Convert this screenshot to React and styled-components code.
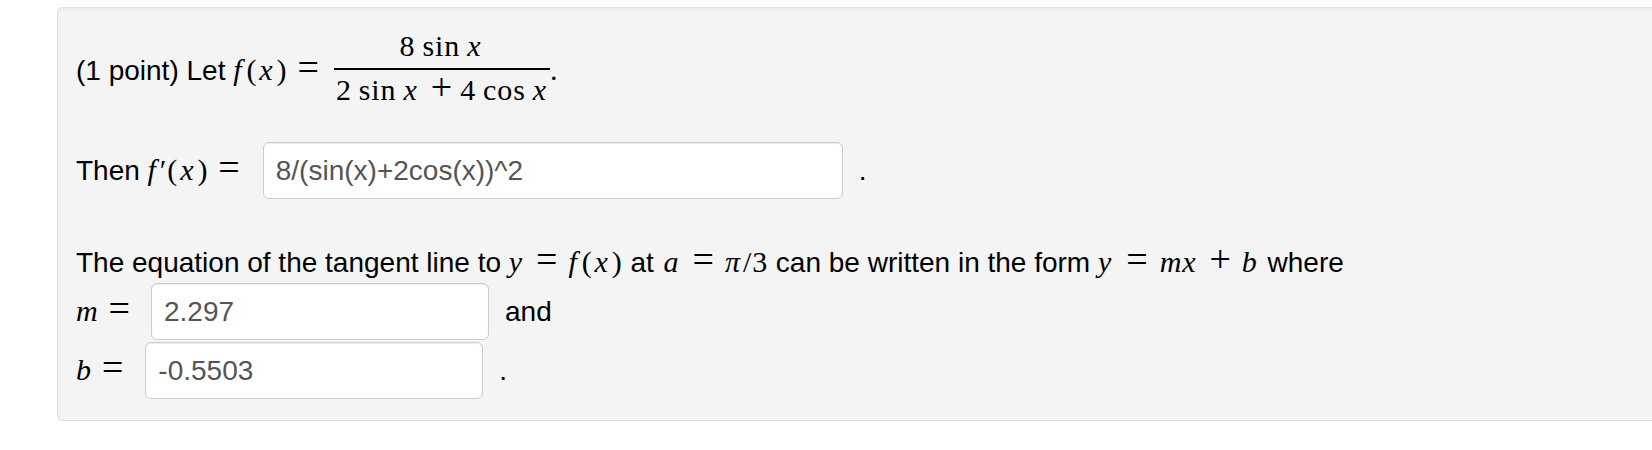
import React from 'react';
import styled, { createGlobalStyle } from 'styled-components';

const GlobalStyle = createGlobalStyle`
  html, body {
    margin: 0;
    padding: 0;
    background: #fff;
    overflow: hidden;
  }
  body {
    font-family: "Liberation Sans", Arial, sans-serif;
    color: #000;
  }
`;

const Page = styled.div`
  padding: 7px 0 0 57px;
  width: 1700px;
`;

const Well = styled.div`
  background: #f4f4f4;
  border: 1px solid #e1e1e1;
  border-radius: 5px;
  box-shadow: inset 0 2px 2px rgba(0, 0, 0, 0.04);
  padding: 23px 18px 21px 18px;
  font-size: 28px;
  line-height: 40px;
`;

const Line = styled.div`
  margin-top: ${(p) => p.$top || 0}px;
  white-space: nowrap;
`;

const AnswerRow = styled.div`
  display: flex;
  align-items: center;
  margin-top: ${(p) => p.$top || 0}px;
`;

const Label = styled.span`
  white-space: nowrap;
`;

const AnswerInput = styled.input`
  box-sizing: border-box;
  width: ${(p) => p.$w}px;
  height: 57px;
  margin-left: ${(p) => p.$gap}px;
  padding: 0 12px;
  background: #fff;
  border: 1px solid #cbcbcb;
  border-radius: 6px;
  box-shadow: inset 0 1px 1px rgba(0, 0, 0, 0.075);
  font-family: "Liberation Sans", Arial, sans-serif;
  font-size: 28px;
  color: #555;
  outline: none;
`;

const After = styled.span`
  margin-left: ${(p) => p.$gap}px;
`;

/* math */
const M = styled.span`
  font-family: "Liberation Serif", "Times New Roman", serif;
  font-size: 30px;
  letter-spacing: 0.9px;
  white-space: nowrap;
`;

const V = styled.i`
  font-style: italic;
  padding: 0 ${(p) => p.$r || 0}px 0 ${(p) => p.$l || 0}px;
`;

const Fn = styled.span`
  margin: 0 ${(p) => p.$r ?? 7}px 0 ${(p) => p.$l ?? 7}px;
`;

const Op = styled.span`
  font-size: 38px;
  line-height: 0;
  letter-spacing: 0;
  margin: 0 ${(p) => p.$r ?? 10}px 0 ${(p) => p.$l ?? 10}px;
`;

const Frac = styled.span`
  display: inline-flex;
  flex-direction: column;
  align-items: center;
  vertical-align: 24px;
  line-height: 30px;
  margin: 0 0 0 5px;
`;

const Numer = styled.span`
  padding-bottom: 7px;
`;

const Bar = styled.span`
  align-self: stretch;
  height: 2px;
  background: #000;
`;

const Denom = styled.span`
  margin-top: 5px;
  padding: 0 2px;
`;

export default function App() {
  return (
    <Page>
      <GlobalStyle />
      <Well>
        <Line>
          (1 point) Let{' '}
          <M>
            <V $r={4}>f</V>(<V $l={2} $r={3}>x</V>)<Op>=</Op>
            <Frac>
              <Numer>
                8<Fn>sin</Fn><V $r={3}>x</V>
              </Numer>
              <Bar />
              <Denom>
                2<Fn>sin</Fn><V $r={3}>x</V><Op $l={10} $r={8}>+</Op>4<Fn>cos</Fn><V $r={1}>x</V>
              </Denom>
            </Frac>
            .
          </M>
        </Line>

        <AnswerRow $top={37}>
          <Label>
            Then{' '}
            <M>
              <V $r={3}>f</V>′(<V $l={2} $r={3}>x</V>)<Op>=</Op>
            </M>
          </Label>
          <AnswerInput $w={580} $gap={13} defaultValue="8/(sin(x)+2cos(x))^2" />
          <After $gap={16}>.</After>
        </AnswerRow>

        <Line $top={43}>
          The equation of the tangent line to{' '}
          <M>
            <V $r={2}>y</V><Op $l={11} $r={11}>=</Op><V $r={4}>f</V>(<V $l={2} $r={3}>x</V>)
          </M>{' '}
          at{' '}
          <M>
            <V $l={2} $r={2}>a</V><Op $l={11} $r={11}>=</Op><V $r={2}>π</V>/3
          </M>{' '}
          {' '}can be written in the form{' '}
          <M>
            <V $r={2}>y</V><Op $l={12} $r={12}>=</Op><V>m</V><V $r={3}>x</V><Op $l={10} $r={11}>+</Op><V $r={2}>b</V>
          </M>{' '}
          where
        </Line>

        <AnswerRow $top={0}>
          <Label>
            <M>
              <V>m</V><Op>=</Op>
            </M>
          </Label>
          <AnswerInput $w={338} $gap={11} defaultValue="2.297" />
          <After $gap={16}>and</After>
        </AnswerRow>

        <AnswerRow $top={2}>
          <Label>
            <M>
              <V>b</V><Op>=</Op>
            </M>
          </Label>
          <AnswerInput $w={338} $gap={12} defaultValue="-0.5503" />
          <After $gap={16}>.</After>
        </AnswerRow>
      </Well>
    </Page>
  );
}
